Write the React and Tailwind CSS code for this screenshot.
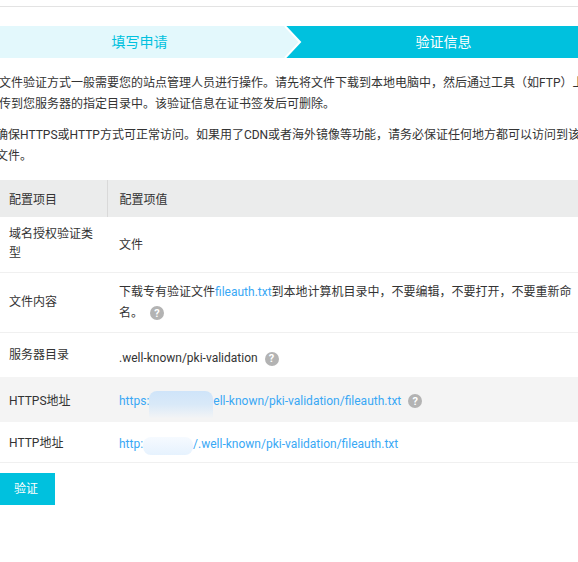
const font = { fontFamily: 'Roboto, "Noto Sans CJK SC", sans-serif' }

const HelpIcon = () => (
  <span className="ml-[7px] inline-flex size-[14px] items-center justify-center rounded-full bg-[#b3b3b3] align-[0px] text-[11px] leading-none font-bold text-white">
    ?
  </span>
)

const App = () => {
  return (
    <div className="h-[562px] w-[578px] overflow-hidden bg-white text-xs text-[#333]" style={font}>
      <div className="mt-[6px] h-px bg-[#e3e3e3]" />

      {/* steps */}
      <div className="relative mt-[19px] flex h-[32px] text-sm">
        <div className="flex w-[285px] items-center justify-center bg-[#e3f8fc] pr-[6px] text-[#00c1de]">
          填写申请
        </div>
        <div className="flex flex-1 items-center justify-center bg-[#00c1de] pl-[24px] text-white">
          验证信息
        </div>
        <svg className="absolute top-0 left-[283px]" width="20" height="32" viewBox="0 0 20 32">
          <path d="M0 0 L2 0 L17 16 L2 32 L0 32 Z" fill="#e3f8fc" />
          <path d="M2 0 L17 16 L2 32" fill="none" stroke="#fff" strokeWidth="2" />
        </svg>
      </div>

      <div className="mt-[15px] w-[600px] leading-[21px]">
        <p className="-ml-[1px]">
          文件验证方式一般需要您的站点管理人员进行操作。请先将文件下载到本地电脑中，然后通过工具（如FTP）上
          <br />
          传到您服务器的指定目录中。该验证信息在证书签发后可删除。
        </p>
        <p className="mt-[10px] -ml-[4px]">
          确保HTTPS或HTTP方式可正常访问。如果用了CDN或者海外镜像等功能，请务必保证任何地方都可以访问到该
          <br />
          文件。
        </p>
      </div>

      <table className="mt-[13px] w-[578px] table-fixed border-collapse">
        <thead>
          <tr className="h-[37px] bg-[#ebecec] text-left">
            <th className="w-[107px] border-r border-[#d9d9d9] pt-[2px] pl-[9px] font-normal">配置项目</th>
            <th className="pt-[2px] pl-[12px] font-normal">配置项值</th>
          </tr>
        </thead>
        <tbody>
          <tr className="h-[55px] border-b border-[#f0f0f0]">
            <td className="pr-2 pl-[9px] leading-[19px]">域名授权验证类型</td>
            <td className="pt-[2px] pl-[12px]">文件</td>
          </tr>
          <tr className="h-[60px] border-b border-[#f0f0f0]">
            <td className="pl-[9px]">文件内容</td>
            <td className="pt-[1px] pl-[12px] leading-[21px]">
              下载专有验证文件<span className="text-[#39a8f5]">fileauth.txt</span>到本地计算机目录中，不要编辑，不要打开，不要重新命名。
              <HelpIcon />
            </td>
          </tr>
          <tr className="h-[45px]">
            <td className="pl-[9px]">服务器目录</td>
            <td className="pt-[7px] pl-[12px]">
              .well-known/pki-validation
              <HelpIcon />
            </td>
          </tr>
          <tr className="h-[45px] bg-[#f4f4f4]">
            <td className="pt-[2px] pl-[9px]">HTTPS地址</td>
            <td className="pt-[9px] pl-[12px]">
              <span className="text-[#39a8f5]">
                https:
                <span className="inline-block h-[27px] w-[64px] rounded-t-lg bg-gradient-to-b from-[#cfe4f9] via-[#d9e9f8] to-[#f3f4f5] align-[-13px]" />
                ell-known/pki-validation/fileauth.txt
              </span>
              <HelpIcon />
            </td>
          </tr>
          <tr className="h-[40px] border-b border-[#f0f0f0]">
            <td className="pt-[2px] pl-[9px]">HTTP地址</td>
            <td className="pt-[7px] pl-[12px]">
              <span className="text-[#39a8f5]">
                http:
                <span className="inline-block h-[18px] w-[50px] rounded-lg bg-gradient-to-b from-[#f6faff] to-[#e6f2fe] align-[-7px]" />
                /.well-known/pki-validation/fileauth.txt
              </span>
            </td>
          </tr>
        </tbody>
      </table>

      <button className="mt-[10px] h-[32px] w-[55px] bg-[#00c1de] pr-[3px] text-xs text-white">验证</button>
    </div>
  )
}

export default App
